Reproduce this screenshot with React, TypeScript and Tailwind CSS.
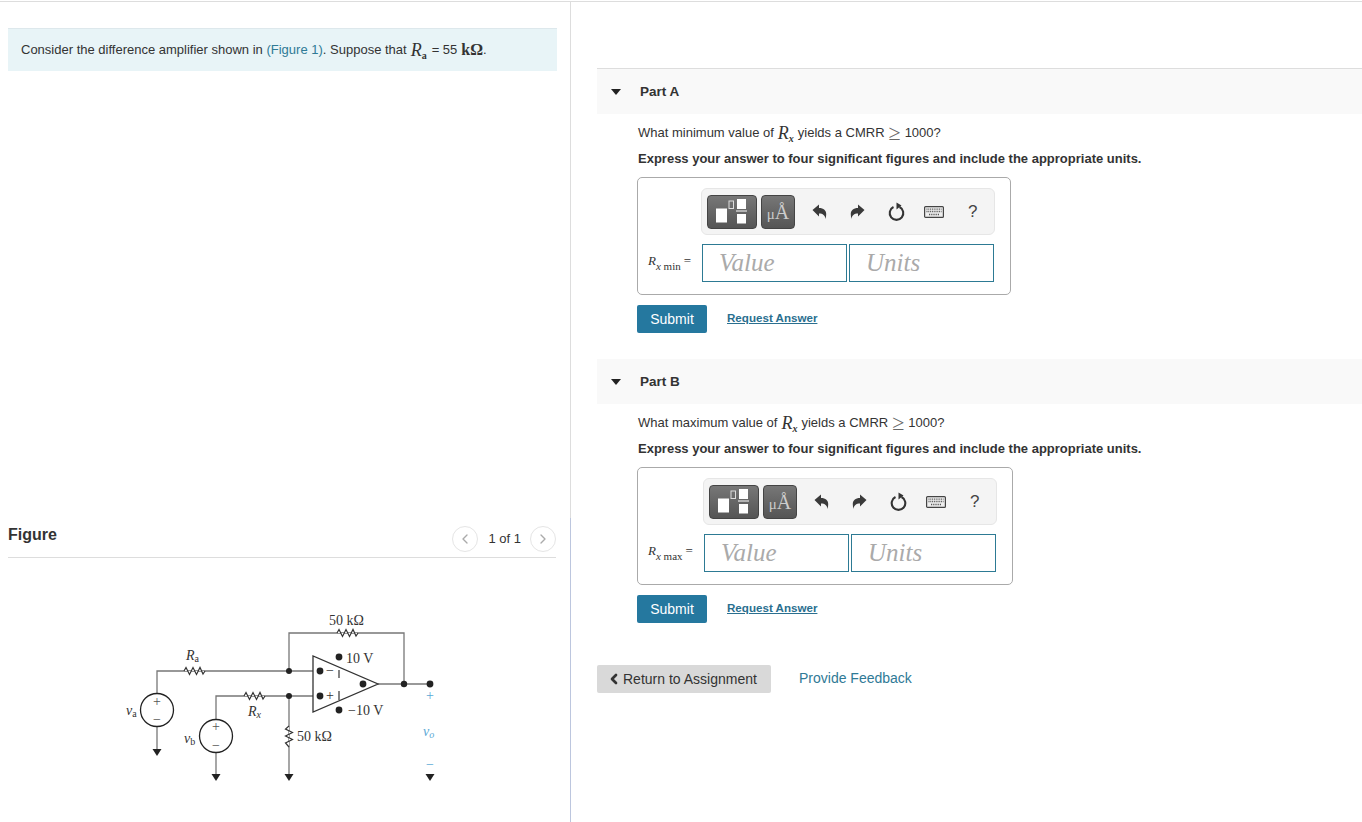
import { ChevronLeft, ChevronRight } from 'lucide-react';

const serif = "font-['Liberation_Serif',serif]";

function Resistor({ x, y }: { x: number; y: number }) {
  return (
    <polyline
      points={`${x},${y} ${x + 2},${y - 3.5} ${x + 5.5},${y + 3.5} ${x + 9},${y - 3.5} ${x + 12.5},${y + 3.5} ${x + 16},${y - 3.5} ${x + 19},${y + 3} ${x + 21},${y}`}
      fill="#fff"
      stroke="#333"
      strokeWidth="1.2"
    />
  );
}

function Ground({ x, y }: { x: number; y: number }) {
  return <polygon points={`${x - 4.5},${y} ${x + 4.5},${y} ${x},${y + 7}`} fill="#222" />;
}

function Circuit() {
  return (
    <svg width="350" height="200" viewBox="0 0 350 200" className="block">
      <g fill="none" stroke="#777" strokeWidth="1.3">
        <path d="M179 71V33H294V84" />
        <path d="M47 94V71H210" />
        <path d="M47 126V150" />
        <path d="M106 120V96H210" />
        <path d="M106 152V175" />
        <path d="M179 96V175" />
        <path d="M268 84H320" />
      </g>
      <g fill="none" stroke="#444" strokeWidth="1.3">
        <circle cx="47" cy="110" r="16.5" fill="#fff" stroke="#222" />
        <circle cx="106" cy="136" r="16.5" fill="#fff" stroke="#222" />
        <path d="M203 56V112L268 84Z" fill="#fff" stroke="#333" />
        <path d="M229 70V78M229 91V100" />
      </g>
      <Resistor x={74} y={71} />
      <Resistor x={134} y={96} />
      <Resistor x={227} y={33} />
      <polyline
        points="179,126 175.5,129 182.5,132.5 175.5,136 182.5,139.5 175.5,143 179,147"
        fill="#fff"
        stroke="#333"
        strokeWidth="1.2"
      />
      <g fill="#222">
        <circle cx="179" cy="71" r="3" />
        <circle cx="179" cy="96" r="3" />
        <circle cx="210" cy="71" r="3.4" />
        <circle cx="210" cy="96" r="3.4" />
        <circle cx="229" cy="57" r="3.4" />
        <circle cx="229" cy="110" r="3.4" />
        <circle cx="253" cy="84" r="3.4" />
        <circle cx="294" cy="84" r="3.2" />
        <circle cx="320" cy="84" r="3.4" />
      </g>
      <Ground x={47} y={149} />
      <Ground x={106} y={174} />
      <Ground x={179} y={174} />
      <Ground x={320} y={174} />
      <g fontFamily="'Liberation Serif', serif" fontSize="14" fill="#333">
        <text x="219" y="25">50 kΩ</text>
        <text x="187" y="141">50 kΩ</text>
        <text x="236" y="63">10 V</text>
        <text x="238" y="115">−10 V</text>
        <text x="76" y="60" fontStyle="italic">R<tspan fontSize="10" fontStyle="normal" dy="2">a</tspan></text>
        <text x="138" y="116" fontStyle="italic">R<tspan fontSize="10" dy="2">x</tspan></text>
        <text x="16" y="115" fontStyle="italic" fontSize="14">v<tspan fontSize="10" fontStyle="normal" dy="2">a</tspan></text>
        <text x="74" y="143" fontStyle="italic" fontSize="14">v<tspan fontSize="10" fontStyle="normal" dy="2">b</tspan></text>
        <text x="43" y="106" fontSize="14" fill="#555">+</text>
        <text x="43" y="124" fontSize="14" fill="#555">−</text>
        <text x="102" y="131" fontSize="14" fill="#555">+</text>
        <text x="102" y="150" fontSize="14" fill="#555">−</text>
        <text x="216" y="75" fontSize="14">−</text>
        <text x="216" y="100" fontSize="14">+</text>
        <g fill="#5aa9d6">
          <text x="316" y="100" fontSize="14">+</text>
          <text x="313" y="136" fontStyle="italic" fontSize="14">v<tspan fontSize="10" dy="2">o</tspan></text>
          <text x="316" y="169" fontSize="14">−</text>
        </g>
      </g>
    </svg>
  );
}

function UndoIcon({ flip }: { flip?: boolean }) {
  return (
    <svg width="15" height="15" viewBox="0 0 15 15" className={flip ? '-scale-x-100' : ''}>
      <path d="M0.5 6L7 0.5V4C11.5 4 14.5 6.5 14.2 10.5L13.8 15C13 11.5 11 9.5 7 9.5V12.5Z" fill="#3a3a3a" />
    </svg>
  );
}

function ResetIcon() {
  return (
    <svg width="18" height="19" viewBox="0 0 18 19">
      <path d="M6.5 5A6.8 6.8 0 1 0 12.5 5" fill="none" stroke="#333" strokeWidth="2.1" />
      <path d="M9.5 0.5V7.5L14.5 3.5Z" fill="#333" />
    </svg>
  );
}

function KeyboardIcon() {
  return (
    <svg width="20" height="12" viewBox="0 0 20 12">
      <rect x="0.6" y="0.6" width="18.8" height="10.8" rx="1" fill="#eee" stroke="#444" strokeWidth="1.2" />
      <path d="M2.5 3.2H17.5M2.5 5.5H17.5M5 8.5H15" stroke="#555" strokeWidth="1.3" strokeDasharray="1 0.8" />
    </svg>
  );
}

function TemplateIcon() {
  return (
    <svg width="32" height="25" viewBox="0 0 32 25">
      <rect x="0" y="9.5" width="11" height="14" fill="#fff" />
      <rect x="13" y="2" width="4.5" height="7.5" fill="none" stroke="#ddd" />
      <rect x="21" y="0" width="9" height="10" fill="#fff" />
      <rect x="20" y="11.5" width="11" height="1" fill="#fff" />
      <rect x="21" y="15" width="9" height="9.5" fill="#fff" />
    </svg>
  );
}

function Toolbar({ wide }: { wide?: boolean }) {
  return (
    <div className={`h-[47px] w-[294px] bg-[#f4f4f4] border border-[#e6e6e6] rounded-md flex items-center pl-[5px] ${wide ? 'ml-[65px]' : 'ml-[63px]'}`}>
      <div className="w-[50px] h-[34px] rounded-[4px] bg-gradient-to-b from-[#777] to-[#555] border border-[#444] flex items-center justify-center">
        <TemplateIcon />
      </div>
      <div className={`w-[34px] h-[34px] ml-1 rounded-[4px] bg-gradient-to-b from-[#777] to-[#555] border border-[#444] flex items-baseline justify-center pt-[6px] leading-none text-[#ccc] ${serif}`}>
        <span className="text-[15px]">μ</span>
        <span className="text-[20px]">Å</span>
      </div>
      <div className="ml-[17px] w-[15px] flex"><UndoIcon /></div>
      <div className="ml-[23px] w-[15px] flex"><UndoIcon flip /></div>
      <div className="ml-[22px] w-[18px] flex"><ResetIcon /></div>
      <div className="ml-[19px] w-[20px] flex"><KeyboardIcon /></div>
      <div className="ml-[24px] text-[17px] text-[#444]">?</div>
    </div>
  );
}

function Part({ letter, word, sub, wide }: { letter: string; word: string; sub: string; wide?: boolean }) {
  return (
    <section>
      <div className="h-[45px] bg-[#f9f9f9] flex items-center pl-[14px]">
        <span className="w-0 h-0 border-x-[5.5px] border-x-transparent border-t-[6px] border-t-[#222]" />
        <h2 className="ml-[19px] pt-[2px] text-[13.5px] font-bold text-[#333]">Part {letter}</h2>
      </div>
      <div className="pl-[40px]">
        <p className="mt-[10px] h-[18px] pl-px text-[13px] leading-[18px] text-[#333] flex items-center gap-[4px]">
          <span>What {word} value of</span>
          <span className={`${serif} italic text-[18px] leading-none`}>R<sub className="text-[10px] font-bold">x</sub></span>
          <span>yields a CMRR</span>
          <span className={`${serif} text-[22px] leading-none text-[#666]`}>≥</span>
          <span>1000?</span>
        </p>
        <p className="mt-[8px] h-[18px] pl-px text-[13px] leading-[18px] font-bold text-[#333]">
          Express your answer to four significant figures and include the appropriate units.
        </p>
        <div className={`mt-[9px] h-[118px] border border-[#aaa] rounded-[5px] pt-[10px] ${wide ? 'w-[376px]' : 'w-[374px]'}`}>
          <Toolbar wide={wide} />
          <div className="mt-[9px] flex items-center">
            <div className={`${serif} pl-[10px] text-[13px] text-[#333] flex items-start ${wide ? 'w-[66px]' : 'w-[64px]'}`}>
              <span className="italic leading-none">R</span>
              <span className="text-[11px] mt-[7px] leading-none whitespace-nowrap"><i>x</i> {sub}</span>
              <span className="ml-[3px] leading-none">=</span>
            </div>
            <div className={`${serif} italic text-[25px] text-[#aaa] w-[145px] h-[38px] border border-[#2d7a94] flex items-center pl-[16px]`}>Value</div>
            <div className={`${serif} italic text-[25px] text-[#aaa] ml-[2px] w-[145px] h-[38px] border border-[#2d7a94] flex items-center pl-[16px]`}>Units</div>
          </div>
        </div>
        <div className="mt-[10px] flex items-center">
          <button className="w-[70px] h-[28px] bg-[#25789f] text-white text-[14px] rounded-[2px]">Submit</button>
          <a className="ml-[20px] -mt-[2px] text-[11.6px] font-bold text-[#2a6f8f] underline">Request Answer</a>
        </div>
      </div>
    </section>
  );
}

export default function App() {
  return (
    <div className="w-[1362px] h-[822px] overflow-hidden bg-white font-['Liberation_Sans',sans-serif] border-t border-[#ddd] mt-px flex">
      <div className="w-[570px] shrink-0 h-full pl-2 pr-[13px]">
        <div className="mt-[26px] h-[43px] bg-[#e8f4f7] border-t border-[#dde8ec] flex items-center pl-[13px] text-[13px] text-[#333]">
          <span>Consider the difference amplifier shown in <span className="text-[#2f7a96]">(Figure 1)</span>. Suppose that</span>
          <span className={`${serif} italic text-[18px] ml-1 leading-none`}>R<sub className="text-[10px] font-bold not-italic">a</sub></span>
          <span className="ml-[5px]">= 55</span>
          <span className={`${serif} font-bold text-[16px] ml-1 leading-none`}>kΩ</span>
          <span>.</span>
        </div>
        <div className="mt-[449px] h-[38px] flex items-center justify-between border-b border-[#ddd] w-[548px]">
          <h2 className="text-[16px] font-bold text-[#333] -mt-[7px]">Figure</h2>
          <div className="flex items-center text-[13px] text-[#333]">
            <span className="w-[26px] h-[26px] rounded-full border border-[#e5e5e5] flex items-center justify-center text-[#aaa]"><ChevronLeft size={16} /></span>
            <span className="ml-[10px] mr-[9px]">1 of 1</span>
            <span className="w-[26px] h-[26px] rounded-full border border-[#e5e5e5] flex items-center justify-center text-[#aaa]"><ChevronRight size={16} /></span>
          </div>
        </div>
        <div className="mt-[42px] ml-[102px]">
          <Circuit />
        </div>
      </div>
      <div className="w-px shrink-0 h-full flex flex-col">
        <div className="h-[516px] bg-[#ddd]" />
        <div className="flex-1 bg-[#bcc6de]" />
      </div>
      <div className="flex-1 pl-[26px]">
        <div className="mt-[66px] border-t border-[#ddd]">
          <Part letter="A" word="minimum" sub="min" />
        </div>
        <div className="mt-[26px]">
          <Part letter="B" word="maximum" sub="max" wide />
        </div>
        <div className="mt-[42px] flex items-center">
          <button className="w-[174px] h-[28px] bg-[#d9d9d9] rounded-[2px] flex items-center pl-[11px] text-[14px] text-[#333]">
            <ChevronLeft size={16} strokeWidth={4} className="-ml-[2px] mr-[1px]" />
            Return to Assignment
          </button>
          <a className="ml-[28px] text-[14px] text-[#2f7a96] -mt-[2px]">Provide Feedback</a>
        </div>
      </div>
    </div>
  );
}
